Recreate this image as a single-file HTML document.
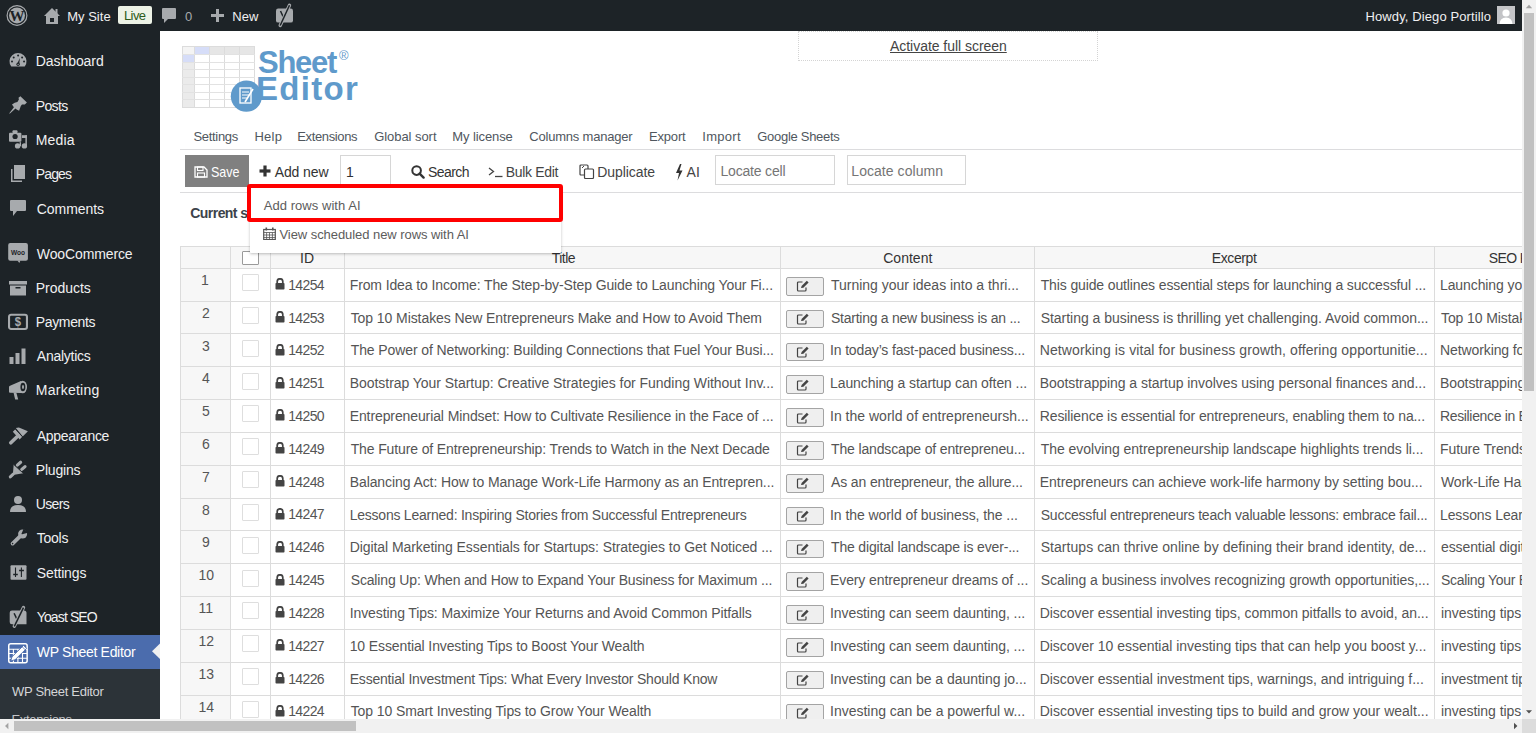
<!DOCTYPE html><html><head><meta charset="utf-8"><title>WP Sheet Editor</title><style>
html,body{margin:0;padding:0;width:1536px;height:733px;overflow:hidden;background:#fff;font-family:"Liberation Sans",sans-serif}
.a{position:absolute}.t{position:absolute;white-space:nowrap;line-height:1}
</style></head><body>
<div class="a" style="left:0px;top:0px;width:1522px;height:31px;background:#1d2327;"></div>
<svg class="a" style="left:5px;top:3px;" width="24" height="25" viewBox="0 0 24 25"><circle cx="12" cy="12.45" r="9.9" fill="none" stroke="#a7aaad" stroke-width="1.2"/><circle cx="12" cy="12.45" r="8" fill="#a7aaad"/><text x="12" y="17.6" text-anchor="middle" font-family="Liberation Serif" font-weight="bold" font-size="15" fill="#1d2327">W</text></svg>
<svg class="a" style="left:43px;top:7px;" width="18" height="18" viewBox="0 0 18 18"><path d="M9 1 L17 9 L15 9 L15 17 L3 17 L3 9 L1 9 Z" fill="#a7aaad"/><rect x="7" y="11" width="4" height="4" fill="#1d2327"/><rect x="12.5" y="2" width="2" height="5" fill="#a7aaad"/></svg>
<div class="t" style="left:67.20px;top:9.80px;font-size:13px;color:#f0f0f1;letter-spacing:0.015px">My Site</div>
<div class="a" style="left:118px;top:6px;width:34px;height:18px;background:#edf2e6;border-radius:2px"></div>
<div class="t" style="left:124.00px;top:9.20px;font-size:13px;color:#2c5a1a;letter-spacing:-0.606px">Live</div>
<svg class="a" style="left:161px;top:7px;" width="16" height="18" viewBox="0 0 16 18"><path d="M2 1 H14 Q15 1 15 2 V11 Q15 12 14 12 H7 L3 16 V12 H2 Q1 12 1 11 V2 Q1 1 2 1 Z" fill="#a7aaad"/></svg>
<div class="t" style="left:185.00px;top:9.80px;font-size:13px;color:#a7aaad">0</div>
<svg class="a" style="left:210px;top:8px;" width="16" height="16" viewBox="0 0 16 16"><rect x="6" y="1" width="3" height="13" fill="#a7aaad"/><rect x="1" y="6" width="13" height="3" fill="#a7aaad"/></svg>
<div class="t" style="left:232.30px;top:9.80px;font-size:13px;color:#f0f0f1;letter-spacing:-0.009px">New</div>
<svg class="a" style="left:270px;top:0px;" width="30" height="30" viewBox="0 0 30 30"><rect x="6" y="8.6" width="17" height="14" rx="2.2" fill="#a7aaad"/><path d="M10.5 11 L14.2 19" stroke="#1d2327" stroke-width="1.5"/><path d="M19.5 5.2 L10.2 25.5" stroke="#a7aaad" stroke-width="3.4" stroke-linecap="round"/><path d="M19.5 5.2 L10.2 25.5" stroke="#1d2327" stroke-width="1.5"/></svg>
<div class="t" style="left:1365.50px;top:10.30px;font-size:13px;color:#f0f0f1;letter-spacing:0.106px">Howdy, Diego Portillo</div>
<div class="a" style="left:1497px;top:6px;width:18px;height:18px;background:#c3c4c7;"></div>
<svg class="a" style="left:1497px;top:6px;" width="18" height="18" viewBox="0 0 18 18"><circle cx="9" cy="7" r="3.6" fill="#fff"/><path d="M2.5 18 Q3 11.5 9 11.5 Q15 11.5 15.5 18 Z" fill="#fff"/></svg>
<div class="a" style="left:0px;top:31px;width:160px;height:688px;background:#1d2327;"></div>
<div class="a" style="left:0px;top:634.6px;width:160px;height:34.4px;background:#4b6cad;"></div>
<div class="a" style="left:0px;top:669px;width:160px;height:50px;background:#2c3338;"></div>
<svg class="a" style="left:151.5px;top:643.3px;" width="8.5" height="16.6" viewBox="0 0 8.5 16.6"><path d="M8.5 0 L0 8.3 L8.5 16.6 Z" fill="#f0f0f1"/></svg>
<div class="t" style="left:35.80px;top:53.70px;font-size:14px;color:#f0f0f1;letter-spacing:-0.075px">Dashboard</div>
<div class="t" style="left:35.80px;top:99.10px;font-size:14px;color:#f0f0f1;letter-spacing:-0.653px">Posts</div>
<div class="t" style="left:35.80px;top:133.20px;font-size:14px;color:#f0f0f1;letter-spacing:0.164px">Media</div>
<div class="t" style="left:35.80px;top:167.30px;font-size:14px;color:#f0f0f1;letter-spacing:-0.874px">Pages</div>
<div class="t" style="left:36.80px;top:201.50px;font-size:14px;color:#f0f0f1;letter-spacing:-0.069px">Comments</div>
<div class="t" style="left:36.80px;top:246.80px;font-size:14px;color:#f0f0f1;letter-spacing:-0.120px">WooCommerce</div>
<div class="t" style="left:35.80px;top:280.90px;font-size:14px;color:#f0f0f1;letter-spacing:-0.035px">Products</div>
<div class="t" style="left:35.80px;top:315.20px;font-size:14px;color:#f0f0f1;letter-spacing:-0.364px">Payments</div>
<div class="t" style="left:36.80px;top:349.30px;font-size:14px;color:#f0f0f1;letter-spacing:-0.253px">Analytics</div>
<div class="t" style="left:35.80px;top:383.40px;font-size:14px;color:#f0f0f1;letter-spacing:0.252px">Marketing</div>
<div class="t" style="left:36.80px;top:428.80px;font-size:14px;color:#f0f0f1;letter-spacing:-0.324px">Appearance</div>
<div class="t" style="left:35.80px;top:463.00px;font-size:14px;color:#f0f0f1;letter-spacing:-0.203px">Plugins</div>
<div class="t" style="left:35.80px;top:497.10px;font-size:14px;color:#f0f0f1;letter-spacing:-0.665px">Users</div>
<div class="t" style="left:36.80px;top:531.20px;font-size:14px;color:#f0f0f1;letter-spacing:-0.271px">Tools</div>
<div class="t" style="left:36.80px;top:565.50px;font-size:14px;color:#f0f0f1;letter-spacing:-0.141px">Settings</div>
<div class="t" style="left:36.80px;top:610.30px;font-size:14px;color:#f0f0f1;letter-spacing:-0.885px">Yoast SEO</div>
<div class="t" style="left:36.80px;top:644.80px;font-size:14px;color:#fff;letter-spacing:-0.316px">WP Sheet Editor</div>
<div class="t" style="left:12.00px;top:684.50px;font-size:13px;color:#d4d5d7;letter-spacing:-0.283px">WP Sheet Editor</div>
<div class="t" style="left:11.50px;top:712.50px;font-size:13px;color:#c3c4c7;letter-spacing:-0.343px">Extensions</div>
<svg class="a" style="left:8px;top:51px;overflow:visible" width="22" height="24" viewBox="0 0 22 24"><path d="M3.28 15.6 A8.5 8.5 0 1 1 16.72 15.6 Z" fill="#a7aaad"/><circle cx="10.1" cy="4.4" r="1" fill="#1d2327"/><circle cx="5.7" cy="6.5" r="1" fill="#1d2327"/><circle cx="14.1" cy="6.5" r="1" fill="#1d2327"/><circle cx="4" cy="10.5" r="1" fill="#1d2327"/><circle cx="16.05" cy="10.5" r="1" fill="#1d2327"/><path d="M9.1 13 L11.9 7 L11.2 13.4 Z" fill="#1d2327"/><circle cx="10.1" cy="13.3" r="1.7" fill="#1d2327"/><circle cx="10.1" cy="13.4" r="0.6" fill="#a7aaad"/></svg>
<svg class="a" style="left:8px;top:96px;overflow:visible" width="22" height="24" viewBox="0 0 22 24"><path d="M12.4 0.2 L18.9 6.5 L16.8 8.6 L14 8.6 L12.8 10.1 L11.1 14.7 L8.6 13.4 L7.5 12.6 L1.7 17.8 L1.3 17.2 L5.9 11.3 L4 8.6 L6.7 6.7 L9.4 6.1 L10.9 3.6 L10.5 1.7 Z" fill="#a7aaad"/></svg>
<svg class="a" style="left:8px;top:130px;overflow:visible" width="22" height="24" viewBox="0 0 22 24"><rect x="1" y="2.7" width="12.4" height="9" rx="1" fill="#a7aaad"/><rect x="4.5" y="0.3" width="5" height="3" rx="1" fill="#a7aaad"/><circle cx="7.1" cy="6.5" r="2.6" fill="#1d2327"/><rect x="13.9" y="5.2" width="5" height="2.8" fill="#a7aaad"/><rect x="17.4" y="5.2" width="1.5" height="11" fill="#a7aaad"/><rect x="11.6" y="12.2" width="1.4" height="4" fill="#a7aaad"/><circle cx="9.6" cy="15.9" r="2.7" fill="#a7aaad"/><circle cx="16.4" cy="15.9" r="2.7" fill="#a7aaad"/></svg>
<svg class="a" style="left:8px;top:164px;overflow:visible" width="22" height="24" viewBox="0 0 22 24"><rect x="6" y="1" width="11" height="14" fill="#a7aaad"/><path d="M3 5 V18 H14 V16.5 H4.5 V5 Z" fill="#a7aaad"/></svg>
<svg class="a" style="left:8px;top:198px;overflow:visible" width="22" height="24" viewBox="0 0 22 24"><path d="M3 2 H17 Q18 2 18 3 V12 Q18 13 17 13 H9 L5 18 V13 H3 Q2 13 2 12 V3 Q2 2 3 2 Z" fill="#a7aaad"/></svg>
<svg class="a" style="left:8px;top:243px;overflow:visible" width="22" height="24" viewBox="0 0 22 24"><rect x="0.2" y="0" width="19.7" height="17.8" rx="2" fill="#a7aaad"/><path d="M9.4 17.6 L11.3 19.9 L12.4 17.6 Z" fill="#a7aaad"/><text x="3" y="11.7" textLength="14" lengthAdjust="spacingAndGlyphs" font-family="Liberation Sans" font-weight="bold" font-size="8" fill="#1d2327">Woo</text></svg>
<svg class="a" style="left:8px;top:278px;overflow:visible" width="22" height="24" viewBox="0 0 22 24"><rect x="1" y="3" width="18" height="3.5" fill="#a7aaad"/><rect x="2" y="7.5" width="16" height="10" fill="#a7aaad"/><rect x="7.5" y="9" width="5" height="1.5" fill="#1d2327"/></svg>
<svg class="a" style="left:8px;top:312px;overflow:visible" width="22" height="24" viewBox="0 0 22 24"><rect x="1.05" y="2.75" width="17.9" height="14.2" rx="2" fill="none" stroke="#a7aaad" stroke-width="2.1"/><text x="9.9" y="14.4" textLength="6.3" lengthAdjust="spacingAndGlyphs" text-anchor="middle" font-family="Liberation Sans" font-weight="bold" font-size="12.5" fill="#a7aaad">$</text></svg>
<svg class="a" style="left:8px;top:346px;overflow:visible" width="22" height="24" viewBox="0 0 22 24"><rect x="1.5" y="11" width="4" height="7" fill="#a7aaad"/><rect x="7.5" y="7" width="4" height="11" fill="#a7aaad"/><rect x="13.5" y="2.5" width="4" height="15.5" fill="#a7aaad"/></svg>
<svg class="a" style="left:8px;top:380px;overflow:visible" width="22" height="24" viewBox="0 0 22 24"><path d="M1 7 Q1 6 2 5.8 L13 1 V13 L2 12.7 Q1 12.7 1 11.7 Z" fill="#a7aaad"/><ellipse cx="14.7" cy="7" rx="4.3" ry="6.3" fill="#a7aaad"/><ellipse cx="14.9" cy="7" rx="2.5" ry="4.3" fill="#1d2327"/><ellipse cx="15" cy="7" rx="1" ry="2.1" fill="#a7aaad"/><path d="M5.5 12.5 L8.3 12.5 L10.2 19.4 L7.2 19.4 Z" fill="#a7aaad"/></svg>
<svg class="a" style="left:8px;top:426px;overflow:visible" width="22" height="24" viewBox="0 0 22 24"><path d="M7.8 2 L10.9 1.4 L19.9 5.3 L14.7 10.6 Z" fill="#a7aaad"/><path d="M4.8 5.8 L7.3 3.3 L14.2 10.7 L11.7 13.5 Z" fill="#a7aaad"/><path d="M7.3 2.8 L14.6 10.8" stroke="#1d2327" stroke-width="0.9"/><path d="M8.8 11 L2.8 16.8" stroke="#a7aaad" stroke-width="3.6" stroke-linecap="round"/></svg>
<svg class="a" style="left:8px;top:460px;overflow:visible" width="22" height="24" viewBox="0 0 22 24"><path d="M5.7 4.5 L15.3 13.3 L4.8 15.1 Z" fill="#a7aaad"/><path d="M5.2 14.2 L2.3 16.9" stroke="#a7aaad" stroke-width="3" stroke-linecap="round"/><path d="M9.4 5.1 L12.6 2.3" stroke="#a7aaad" stroke-width="3.2" stroke-linecap="round"/><path d="M13.8 9.4 L17 6.6" stroke="#a7aaad" stroke-width="3.2" stroke-linecap="round"/><path d="M5.7 4.5 L15.3 13.3" stroke="#1d2327" stroke-width="0.8"/></svg>
<svg class="a" style="left:8px;top:494px;overflow:visible" width="22" height="24" viewBox="0 0 22 24"><circle cx="10" cy="6" r="4" fill="#a7aaad"/><path d="M2 18 Q2 11 10 11 Q18 11 18 18 Z" fill="#a7aaad"/></svg>
<svg class="a" style="left:8px;top:528px;overflow:visible" width="22" height="24" viewBox="0 0 22 24"><circle cx="14.6" cy="6" r="4.5" fill="#a7aaad"/><path d="M13.2 6.4 L15.6 0.8 L21 4.6 Z" fill="#1d2327"/><path d="M12.5 7.8 L4.6 15.6" stroke="#a7aaad" stroke-width="3.8" stroke-linecap="round"/><circle cx="4.6" cy="15.6" r="0.8" fill="#1d2327"/></svg>
<svg class="a" style="left:8px;top:562px;overflow:visible" width="22" height="24" viewBox="0 0 22 24"><rect x="2.5" y="3.3" width="16" height="14.5" rx="1" fill="#a7aaad"/><path d="M7.5 5.5 V15.1 M13.4 5.5 V15.1" stroke="#1d2327" stroke-width="1.1"/><path d="M5.2 12.4 H9.8 M11.1 8.4 H15.9" stroke="#1d2327" stroke-width="1.5"/></svg>
<svg class="a" style="left:8px;top:607px;overflow:visible" width="22" height="24" viewBox="0 0 22 24"><path d="M4 3.45 H16 Q18.5 3.45 18.5 6 V17.2 H4 Q1.7 17.2 1.7 15 V5.7 Q1.7 3.45 4 3.45 Z" fill="#a7aaad"/><path d="M6.1 6.3 L9.6 13.6" stroke="#1d2327" stroke-width="1.5"/><path d="M15.5 0.6 L6.3 19.3" stroke="#a7aaad" stroke-width="3.4" stroke-linecap="round"/><path d="M15.5 0.6 L6.3 19.3" stroke="#1d2327" stroke-width="1.5"/></svg>
<svg class="a" style="left:8px;top:642px;overflow:visible" width="22" height="24" viewBox="0 0 22 24"><rect x="0.75" y="1.75" width="18.4" height="19" rx="2" fill="none" stroke="#fff" stroke-width="1.5"/><path d="M0.75 7.3 H19.15 M0.75 11.5 H19.15 M0.75 16.2 H19.15 M5.4 7.3 V20.75 M9.9 7.3 V20.75 M14.5 7.3 V20.75" stroke="#fff" stroke-width="1.1"/><path d="M2.7 18.9 L4 14.8 L15.6 3.4 L18.6 6.4 L7 17.8 Z" fill="#fff" stroke="#4b6cad" stroke-width="0.9"/><path d="M14.2 4.8 L17.2 7.8" stroke="#4b6cad" stroke-width="0.8"/></svg>
<svg class="a" style="left:182px;top:46px;" width="73" height="62" viewBox="0 0 73 62"><rect x="0.5" y="0.5" width="72" height="61" fill="#fff" stroke="#dcdcdc"/><rect x="1" y="1" width="12" height="60" fill="#ebebeb"/><rect x="1" y="1" width="71" height="8" fill="#e6e6e6"/><rect x="1" y="1" width="12" height="8" fill="#f4f4f4"/><rect x="13" y="1" width="15" height="8" fill="#d6ddf8"/><rect x="1" y="9" width="12" height="7" fill="#d6ddf8"/><line x1="12.5" y1="0" x2="12.5" y2="62" stroke="#dcdcdc" stroke-width="1"/><line x1="27.5" y1="0" x2="27.5" y2="62" stroke="#dcdcdc" stroke-width="1"/><line x1="42.5" y1="0" x2="42.5" y2="62" stroke="#dcdcdc" stroke-width="1"/><line x1="57.5" y1="0" x2="57.5" y2="62" stroke="#dcdcdc" stroke-width="1"/><line x1="0" y1="8.5" x2="73" y2="8.5" stroke="#e2e2e2" stroke-width="1"/><line x1="0" y1="16.5" x2="73" y2="16.5" stroke="#e2e2e2" stroke-width="1"/><line x1="0" y1="23.5" x2="73" y2="23.5" stroke="#e2e2e2" stroke-width="1"/><line x1="0" y1="31.5" x2="73" y2="31.5" stroke="#e2e2e2" stroke-width="1"/><line x1="0" y1="38.5" x2="73" y2="38.5" stroke="#e2e2e2" stroke-width="1"/><line x1="0" y1="46.5" x2="73" y2="46.5" stroke="#e2e2e2" stroke-width="1"/><line x1="0" y1="53.5" x2="73" y2="53.5" stroke="#e2e2e2" stroke-width="1"/></svg>
<svg class="a" style="left:230px;top:80px;" width="33" height="33" viewBox="0 0 33 33"><circle cx="16.4" cy="16.2" r="15.6" fill="#5f9acb"/><rect x="10" y="8" width="11" height="15" fill="none" stroke="#fff" stroke-width="1.3"/><path d="M12 12 H19 M12 15 H19 M12 18 H17" stroke="#fff" stroke-width="1"/><path d="M15 22 L23 9" stroke="#fff" stroke-width="1.6"/></svg>
<div class="t" style="left:258.00px;top:46.80px;font-size:31px;color:#5f9acb;font-weight:bold;letter-spacing:-1.274px">Sheet</div>
<div class="t" style="left:256.00px;top:72.00px;font-size:33px;color:#5f9acb;font-weight:bold;letter-spacing:1.303px">Editor</div>
<div class="t" style="left:339.00px;top:48.50px;font-size:13px;color:#5f9acb">®</div>
<div class="a" style="left:798px;top:31px;width:300px;height:29.5px;background:transparent;box-sizing:border-box;border:1px dotted #d4d4d4"></div>
<div class="t" style="left:890.00px;top:38.80px;font-size:14px;color:#444;letter-spacing:-0.037px;text-decoration:underline">Activate full screen</div>
<div class="t" style="left:193.40px;top:130.00px;font-size:13px;color:#50575e;letter-spacing:-0.296px">Settings</div>
<div class="t" style="left:254.40px;top:130.00px;font-size:13px;color:#50575e;letter-spacing:0.265px">Help</div>
<div class="t" style="left:297.30px;top:130.00px;font-size:13px;color:#50575e;letter-spacing:-0.366px">Extensions</div>
<div class="t" style="left:374.20px;top:130.00px;font-size:13px;color:#50575e;letter-spacing:-0.055px">Global sort</div>
<div class="t" style="left:452.30px;top:130.00px;font-size:13px;color:#50575e;letter-spacing:-0.097px">My license</div>
<div class="t" style="left:529.30px;top:130.00px;font-size:13px;color:#50575e;letter-spacing:-0.206px">Columns manager</div>
<div class="t" style="left:649.10px;top:130.00px;font-size:13px;color:#50575e;letter-spacing:-0.212px">Export</div>
<div class="t" style="left:702.30px;top:130.00px;font-size:13px;color:#50575e;letter-spacing:0.274px">Import</div>
<div class="t" style="left:757.30px;top:130.00px;font-size:13px;color:#50575e;letter-spacing:-0.292px">Google Sheets</div>
<div class="a" style="left:180px;top:149px;width:1342px;height:1px;background:#dcdcde;"></div>
<div class="a" style="left:185px;top:155.3px;width:64.3px;height:31.5px;background:#808080;"></div>
<svg class="a" style="left:194px;top:166px;" width="14" height="12" viewBox="0 0 14 12"><path d="M1 1 H10 L13 4 V11 H1 Z" fill="none" stroke="#fff" stroke-width="1.3"/><rect x="3.5" y="1" width="5.5" height="3.5" fill="none" stroke="#fff" stroke-width="1.1"/><rect x="3.5" y="7" width="7" height="4" fill="none" stroke="#fff" stroke-width="1.1"/></svg>
<div class="t" style="left:210.90px;top:163.80px;font-size:15px;color:#fff;transform:scaleX(0.8361);transform-origin:0.00px 0">Save</div>
<svg class="a" style="left:259px;top:165px;" width="12" height="12" viewBox="0 0 12 12"><rect x="4.4" y="0.5" width="3.2" height="11" fill="#333"/><rect x="0.5" y="4.4" width="11" height="3.2" fill="#333"/></svg>
<div class="t" style="left:274.70px;top:164.80px;font-size:14px;color:#333;letter-spacing:-0.112px">Add new</div>
<div class="a" style="left:340.2px;top:155.3px;width:51px;height:30px;background:#fff;box-sizing:border-box;border:1px solid #d6d6d6"></div>
<div class="t" style="left:346.00px;top:164.80px;font-size:14px;color:#333">1</div>
<svg class="a" style="left:411px;top:165px;" width="14" height="14" viewBox="0 0 14 14"><circle cx="5.6" cy="5.6" r="4.3" fill="none" stroke="#333" stroke-width="2"/><path d="M8.6 8.6 L12.6 12.6" stroke="#333" stroke-width="2.4" stroke-linecap="round"/></svg>
<div class="t" style="left:428.00px;top:164.80px;font-size:14px;color:#333;letter-spacing:-0.574px">Search</div>
<svg class="a" style="left:488px;top:166px;" width="16" height="12" viewBox="0 0 16 12"><path d="M1 2 L5.5 5.5 L1 9" fill="none" stroke="#444" stroke-width="1.3"/><path d="M7 10.5 H14.5" stroke="#444" stroke-width="1.3"/></svg>
<div class="t" style="left:505.70px;top:164.70px;font-size:14px;color:#444;letter-spacing:-0.307px">Bulk Edit</div>
<svg class="a" style="left:579px;top:164px;" width="16" height="15" viewBox="0 0 16 15"><rect x="5.5" y="5" width="9" height="9.5" rx="1" fill="#fff" stroke="#444" stroke-width="1.2"/><path d="M5.5 11 H2 Q1 11 1 10 V2 Q1 1 2 1 H8 Q9 1 9 2 V5" fill="none" stroke="#444" stroke-width="1.2"/><path d="M3 4 L5 2" stroke="#444" stroke-width="1"/></svg>
<div class="t" style="left:597.30px;top:164.70px;font-size:14px;color:#444;letter-spacing:-0.085px">Duplicate</div>
<svg class="a" style="left:675px;top:164px;" width="8" height="17" viewBox="0 0 8 17"><path d="M5 0 L1 9 H4 L2.5 16.5 L7.5 6.5 H4.5 L6.5 0 Z" fill="#333"/></svg>
<div class="t" style="left:686.60px;top:164.70px;font-size:14px;color:#444;letter-spacing:-0.038px">AI</div>
<div class="a" style="left:715.2px;top:155.3px;width:119.6px;height:29.5px;background:#fff;box-sizing:border-box;border:1px solid #d6d6d6"></div>
<div class="t" style="left:720.50px;top:163.80px;font-size:14px;color:#757575;letter-spacing:-0.192px">Locate cell</div>
<div class="a" style="left:846.5px;top:155.3px;width:119.7px;height:29.5px;background:#fff;box-sizing:border-box;border:1px solid #d6d6d6"></div>
<div class="t" style="left:851.30px;top:163.80px;font-size:14px;color:#757575;letter-spacing:0.053px">Locate column</div>
<div class="a" style="left:180px;top:192px;width:1342px;height:1px;background:#dcdcde;"></div>
<div class="t" style="left:190.30px;top:205.70px;font-size:14px;color:#3c434a;font-weight:bold;letter-spacing:-0.556px">Current sheet</div>
<div class="a" style="left:0;top:0;width:1522px;height:719px;overflow:hidden">
<div class="a" style="left:180.5px;top:246.3px;width:1342px;height:22px;background:#f7f7f7;"></div>
<div class="a" style="left:180.5px;top:268.3px;width:50px;height:460px;background:#f7f7f7;"></div>
<div class="a" style="left:180px;top:246px;width:1342px;height:1px;background:#dcdcdc;"></div>
<div class="a" style="left:180px;top:267.8px;width:1342px;height:1px;background:#dcdcdc;"></div>
<div class="a" style="left:180px;top:300.6px;width:1342px;height:1px;background:#dcdcdc;"></div>
<div class="a" style="left:180px;top:333.4px;width:1342px;height:1px;background:#dcdcdc;"></div>
<div class="a" style="left:180px;top:366.3px;width:1342px;height:1px;background:#dcdcdc;"></div>
<div class="a" style="left:180px;top:399.1px;width:1342px;height:1px;background:#dcdcdc;"></div>
<div class="a" style="left:180px;top:431.9px;width:1342px;height:1px;background:#dcdcdc;"></div>
<div class="a" style="left:180px;top:464.7px;width:1342px;height:1px;background:#dcdcdc;"></div>
<div class="a" style="left:180px;top:497.5px;width:1342px;height:1px;background:#dcdcdc;"></div>
<div class="a" style="left:180px;top:530.4px;width:1342px;height:1px;background:#dcdcdc;"></div>
<div class="a" style="left:180px;top:563.2px;width:1342px;height:1px;background:#dcdcdc;"></div>
<div class="a" style="left:180px;top:596.0px;width:1342px;height:1px;background:#dcdcdc;"></div>
<div class="a" style="left:180px;top:628.8px;width:1342px;height:1px;background:#dcdcdc;"></div>
<div class="a" style="left:180px;top:661.6px;width:1342px;height:1px;background:#dcdcdc;"></div>
<div class="a" style="left:180px;top:694.5px;width:1342px;height:1px;background:#dcdcdc;"></div>
<div class="a" style="left:180px;top:727.3px;width:1342px;height:1px;background:#dcdcdc;"></div>
<div class="a" style="left:180px;top:246px;width:1px;height:480px;background:#dcdcdc;"></div>
<div class="a" style="left:230px;top:246px;width:1px;height:480px;background:#dcdcdc;"></div>
<div class="a" style="left:270px;top:246px;width:1px;height:480px;background:#dcdcdc;"></div>
<div class="a" style="left:344px;top:246px;width:1px;height:480px;background:#dcdcdc;"></div>
<div class="a" style="left:780px;top:246px;width:1px;height:480px;background:#dcdcdc;"></div>
<div class="a" style="left:1034px;top:246px;width:1px;height:480px;background:#dcdcdc;"></div>
<div class="a" style="left:1434px;top:246px;width:1px;height:480px;background:#dcdcdc;"></div>
<div class="t" style="left:300.10px;top:250.80px;font-size:14px;color:#333;letter-spacing:-0.090px">ID</div>
<div class="t" style="left:551.70px;top:250.80px;font-size:14px;color:#333;letter-spacing:-0.511px">Title</div>
<div class="t" style="left:883.20px;top:250.50px;font-size:14px;color:#333;letter-spacing:0.026px">Content</div>
<div class="t" style="left:1211.70px;top:250.50px;font-size:14px;color:#333;letter-spacing:-0.379px">Excerpt</div>
<div class="t" style="left:1488.80px;top:250.50px;font-size:14px;color:#333;letter-spacing:-0.600px">SEO Keyword</div>
<div class="a" style="left:241.8px;top:251px;width:17px;height:13.5px;background:#fff;box-sizing:border-box;border:1px solid #9a9a9a;border-radius:1px"></div>
<div class="t" style="left:201.00px;top:272.90px;font-size:14px;color:#555">1</div>
<div class="a" style="left:241.8px;top:274.1px;width:17px;height:17px;background:#fff;box-sizing:border-box;border:1px solid #dedede;border-radius:1px"></div>
<svg class="a" style="left:275px;top:278.1px;" width="10" height="12" viewBox="0 0 10 12"><path d="M2.2 5 V3.6 A2.8 2.8 0 0 1 7.8 3.6 V5" fill="none" stroke="#444" stroke-width="1.7"/><rect x="0.5" y="5" width="9" height="6.5" rx="0.8" fill="#444"/></svg>
<div class="t" style="left:288.20px;top:277.70px;font-size:14px;color:#555;letter-spacing:-0.636px">14254</div>
<div class="t" style="left:349.70px;top:277.80px;font-size:14px;color:#555;letter-spacing:-0.114px">From Idea to Income: The Step-by-Step Guide to Launching Your Fi...</div>
<div class="a" style="left:786.3px;top:276.9px;width:37.4px;height:18.8px;background:#efefef;box-sizing:border-box;border:1px solid #a4a4a4;border-radius:2px"></div>
<svg class="a" style="left:796px;top:280.3px;" width="14" height="12" viewBox="0 0 14 12"><path d="M6.5 2 H2.5 Q1.5 2 1.5 3 V10 Q1.5 11 2.5 11 H9 Q10 11 10 10 V7.5" fill="none" stroke="#444" stroke-width="1.2"/><path d="M5 8 L5.6 6 L10.8 0.8 L12.6 2.6 L7.4 7.8 Z" fill="#444"/></svg>
<div class="t" style="left:831.00px;top:277.80px;font-size:14px;color:#555;letter-spacing:-0.018px">Turning your ideas into a thri...</div>
<div class="t" style="left:1040.70px;top:277.80px;font-size:14px;color:#555;letter-spacing:-0.129px">This guide outlines essential steps for launching a successful ...</div>
<div class="t" style="left:1440.00px;top:277.80px;font-size:14px;color:#555;letter-spacing:-0.100px">Launching your idea</div>
<div class="t" style="left:202.00px;top:305.72px;font-size:14px;color:#555">2</div>
<div class="a" style="left:241.8px;top:306.9px;width:17px;height:17px;background:#fff;box-sizing:border-box;border:1px solid #dedede;border-radius:1px"></div>
<svg class="a" style="left:275px;top:310.9px;" width="10" height="12" viewBox="0 0 10 12"><path d="M2.2 5 V3.6 A2.8 2.8 0 0 1 7.8 3.6 V5" fill="none" stroke="#444" stroke-width="1.7"/><rect x="0.5" y="5" width="9" height="6.5" rx="0.8" fill="#444"/></svg>
<div class="t" style="left:288.20px;top:310.52px;font-size:14px;color:#555;letter-spacing:-0.636px">14253</div>
<div class="t" style="left:350.70px;top:310.62px;font-size:14px;color:#555;letter-spacing:-0.076px">Top 10 Mistakes New Entrepreneurs Make and How to Avoid Them</div>
<div class="a" style="left:786.3px;top:309.7px;width:37.4px;height:18.8px;background:#efefef;box-sizing:border-box;border:1px solid #a4a4a4;border-radius:2px"></div>
<svg class="a" style="left:796px;top:313.1px;" width="14" height="12" viewBox="0 0 14 12"><path d="M6.5 2 H2.5 Q1.5 2 1.5 3 V10 Q1.5 11 2.5 11 H9 Q10 11 10 10 V7.5" fill="none" stroke="#444" stroke-width="1.2"/><path d="M5 8 L5.6 6 L10.8 0.8 L12.6 2.6 L7.4 7.8 Z" fill="#444"/></svg>
<div class="t" style="left:831.00px;top:310.62px;font-size:14px;color:#555;letter-spacing:-0.252px">Starting a new business is an ...</div>
<div class="t" style="left:1040.70px;top:310.62px;font-size:14px;color:#555;letter-spacing:-0.028px">Starting a business is thrilling yet challenging. Avoid common...</div>
<div class="t" style="left:1441.00px;top:310.62px;font-size:14px;color:#555;letter-spacing:-0.100px">Top 10 Mistakes</div>
<div class="t" style="left:202.00px;top:338.54px;font-size:14px;color:#555">3</div>
<div class="a" style="left:241.8px;top:339.7px;width:17px;height:17px;background:#fff;box-sizing:border-box;border:1px solid #dedede;border-radius:1px"></div>
<svg class="a" style="left:275px;top:343.7px;" width="10" height="12" viewBox="0 0 10 12"><path d="M2.2 5 V3.6 A2.8 2.8 0 0 1 7.8 3.6 V5" fill="none" stroke="#444" stroke-width="1.7"/><rect x="0.5" y="5" width="9" height="6.5" rx="0.8" fill="#444"/></svg>
<div class="t" style="left:288.20px;top:343.34px;font-size:14px;color:#555;letter-spacing:-0.636px">14252</div>
<div class="t" style="left:350.70px;top:343.44px;font-size:14px;color:#555;letter-spacing:-0.095px">The Power of Networking: Building Connections that Fuel Your Busi...</div>
<div class="a" style="left:786.3px;top:342.5px;width:37.4px;height:18.8px;background:#efefef;box-sizing:border-box;border:1px solid #a4a4a4;border-radius:2px"></div>
<svg class="a" style="left:796px;top:345.9px;" width="14" height="12" viewBox="0 0 14 12"><path d="M6.5 2 H2.5 Q1.5 2 1.5 3 V10 Q1.5 11 2.5 11 H9 Q10 11 10 10 V7.5" fill="none" stroke="#444" stroke-width="1.2"/><path d="M5 8 L5.6 6 L10.8 0.8 L12.6 2.6 L7.4 7.8 Z" fill="#444"/></svg>
<div class="t" style="left:830.00px;top:343.44px;font-size:14px;color:#555;letter-spacing:-0.146px">In today’s fast-paced business...</div>
<div class="t" style="left:1039.70px;top:343.44px;font-size:14px;color:#555;letter-spacing:0.109px">Networking is vital for business growth, offering opportunitie...</div>
<div class="t" style="left:1440.00px;top:343.44px;font-size:14px;color:#555;letter-spacing:-0.100px">Networking for growth</div>
<div class="t" style="left:202.00px;top:371.36px;font-size:14px;color:#555">4</div>
<div class="a" style="left:241.8px;top:372.6px;width:17px;height:17px;background:#fff;box-sizing:border-box;border:1px solid #dedede;border-radius:1px"></div>
<svg class="a" style="left:275px;top:376.6px;" width="10" height="12" viewBox="0 0 10 12"><path d="M2.2 5 V3.6 A2.8 2.8 0 0 1 7.8 3.6 V5" fill="none" stroke="#444" stroke-width="1.7"/><rect x="0.5" y="5" width="9" height="6.5" rx="0.8" fill="#444"/></svg>
<div class="t" style="left:288.20px;top:376.16px;font-size:14px;color:#555;letter-spacing:-0.636px">14251</div>
<div class="t" style="left:349.70px;top:376.26px;font-size:14px;color:#555;letter-spacing:-0.040px">Bootstrap Your Startup: Creative Strategies for Funding Without Inv...</div>
<div class="a" style="left:786.3px;top:375.4px;width:37.4px;height:18.8px;background:#efefef;box-sizing:border-box;border:1px solid #a4a4a4;border-radius:2px"></div>
<svg class="a" style="left:796px;top:378.8px;" width="14" height="12" viewBox="0 0 14 12"><path d="M6.5 2 H2.5 Q1.5 2 1.5 3 V10 Q1.5 11 2.5 11 H9 Q10 11 10 10 V7.5" fill="none" stroke="#444" stroke-width="1.2"/><path d="M5 8 L5.6 6 L10.8 0.8 L12.6 2.6 L7.4 7.8 Z" fill="#444"/></svg>
<div class="t" style="left:830.00px;top:376.26px;font-size:14px;color:#555;letter-spacing:-0.092px">Launching a startup can often ...</div>
<div class="t" style="left:1039.70px;top:376.26px;font-size:14px;color:#555;letter-spacing:-0.044px">Bootstrapping a startup involves using personal finances and...</div>
<div class="t" style="left:1440.00px;top:376.26px;font-size:14px;color:#555;letter-spacing:-0.100px">Bootstrapping startup</div>
<div class="t" style="left:202.00px;top:404.18px;font-size:14px;color:#555">5</div>
<div class="a" style="left:241.8px;top:405.4px;width:17px;height:17px;background:#fff;box-sizing:border-box;border:1px solid #dedede;border-radius:1px"></div>
<svg class="a" style="left:275px;top:409.4px;" width="10" height="12" viewBox="0 0 10 12"><path d="M2.2 5 V3.6 A2.8 2.8 0 0 1 7.8 3.6 V5" fill="none" stroke="#444" stroke-width="1.7"/><rect x="0.5" y="5" width="9" height="6.5" rx="0.8" fill="#444"/></svg>
<div class="t" style="left:288.20px;top:408.98px;font-size:14px;color:#555;letter-spacing:-0.636px">14250</div>
<div class="t" style="left:349.70px;top:409.08px;font-size:14px;color:#555;letter-spacing:-0.103px">Entrepreneurial Mindset: How to Cultivate Resilience in the Face of ...</div>
<div class="a" style="left:786.3px;top:408.2px;width:37.4px;height:18.8px;background:#efefef;box-sizing:border-box;border:1px solid #a4a4a4;border-radius:2px"></div>
<svg class="a" style="left:796px;top:411.6px;" width="14" height="12" viewBox="0 0 14 12"><path d="M6.5 2 H2.5 Q1.5 2 1.5 3 V10 Q1.5 11 2.5 11 H9 Q10 11 10 10 V7.5" fill="none" stroke="#444" stroke-width="1.2"/><path d="M5 8 L5.6 6 L10.8 0.8 L12.6 2.6 L7.4 7.8 Z" fill="#444"/></svg>
<div class="t" style="left:830.00px;top:409.08px;font-size:14px;color:#555;letter-spacing:0.008px">In the world of entrepreneursh...</div>
<div class="t" style="left:1039.70px;top:409.08px;font-size:14px;color:#555;letter-spacing:-0.095px">Resilience is essential for entrepreneurs, enabling them to na...</div>
<div class="t" style="left:1440.00px;top:409.08px;font-size:14px;color:#555;letter-spacing:-0.349px">Resilience in Entrepreneurship</div>
<div class="t" style="left:202.00px;top:437.00px;font-size:14px;color:#555">6</div>
<div class="a" style="left:241.8px;top:438.2px;width:17px;height:17px;background:#fff;box-sizing:border-box;border:1px solid #dedede;border-radius:1px"></div>
<svg class="a" style="left:275px;top:442.2px;" width="10" height="12" viewBox="0 0 10 12"><path d="M2.2 5 V3.6 A2.8 2.8 0 0 1 7.8 3.6 V5" fill="none" stroke="#444" stroke-width="1.7"/><rect x="0.5" y="5" width="9" height="6.5" rx="0.8" fill="#444"/></svg>
<div class="t" style="left:288.20px;top:441.80px;font-size:14px;color:#555;letter-spacing:-0.636px">14249</div>
<div class="t" style="left:350.70px;top:441.90px;font-size:14px;color:#555;letter-spacing:-0.127px">The Future of Entrepreneurship: Trends to Watch in the Next Decade</div>
<div class="a" style="left:786.3px;top:441.0px;width:37.4px;height:18.8px;background:#efefef;box-sizing:border-box;border:1px solid #a4a4a4;border-radius:2px"></div>
<svg class="a" style="left:796px;top:444.4px;" width="14" height="12" viewBox="0 0 14 12"><path d="M6.5 2 H2.5 Q1.5 2 1.5 3 V10 Q1.5 11 2.5 11 H9 Q10 11 10 10 V7.5" fill="none" stroke="#444" stroke-width="1.2"/><path d="M5 8 L5.6 6 L10.8 0.8 L12.6 2.6 L7.4 7.8 Z" fill="#444"/></svg>
<div class="t" style="left:831.00px;top:441.90px;font-size:14px;color:#555;letter-spacing:-0.146px">The landscape of entrepreneu...</div>
<div class="t" style="left:1040.70px;top:441.90px;font-size:14px;color:#555;letter-spacing:-0.027px">The evolving entrepreneurship landscape highlights trends li...</div>
<div class="t" style="left:1440.00px;top:441.90px;font-size:14px;color:#555;letter-spacing:-0.100px">Future Trends</div>
<div class="t" style="left:202.00px;top:469.82px;font-size:14px;color:#555">7</div>
<div class="a" style="left:241.8px;top:471.0px;width:17px;height:17px;background:#fff;box-sizing:border-box;border:1px solid #dedede;border-radius:1px"></div>
<svg class="a" style="left:275px;top:475.0px;" width="10" height="12" viewBox="0 0 10 12"><path d="M2.2 5 V3.6 A2.8 2.8 0 0 1 7.8 3.6 V5" fill="none" stroke="#444" stroke-width="1.7"/><rect x="0.5" y="5" width="9" height="6.5" rx="0.8" fill="#444"/></svg>
<div class="t" style="left:288.20px;top:474.62px;font-size:14px;color:#555;letter-spacing:-0.636px">14248</div>
<div class="t" style="left:349.70px;top:474.72px;font-size:14px;color:#555;letter-spacing:-0.084px">Balancing Act: How to Manage Work-Life Harmony as an Entrepren...</div>
<div class="a" style="left:786.3px;top:473.8px;width:37.4px;height:18.8px;background:#efefef;box-sizing:border-box;border:1px solid #a4a4a4;border-radius:2px"></div>
<svg class="a" style="left:796px;top:477.2px;" width="14" height="12" viewBox="0 0 14 12"><path d="M6.5 2 H2.5 Q1.5 2 1.5 3 V10 Q1.5 11 2.5 11 H9 Q10 11 10 10 V7.5" fill="none" stroke="#444" stroke-width="1.2"/><path d="M5 8 L5.6 6 L10.8 0.8 L12.6 2.6 L7.4 7.8 Z" fill="#444"/></svg>
<div class="t" style="left:831.00px;top:474.72px;font-size:14px;color:#555;letter-spacing:-0.132px">As an entrepreneur, the allure...</div>
<div class="t" style="left:1039.70px;top:474.72px;font-size:14px;color:#555;letter-spacing:-0.025px">Entrepreneurs can achieve work-life harmony by setting bou...</div>
<div class="t" style="left:1441.00px;top:474.72px;font-size:14px;color:#555;letter-spacing:-0.100px">Work-Life Harmony</div>
<div class="t" style="left:202.00px;top:502.64px;font-size:14px;color:#555">8</div>
<div class="a" style="left:241.8px;top:503.8px;width:17px;height:17px;background:#fff;box-sizing:border-box;border:1px solid #dedede;border-radius:1px"></div>
<svg class="a" style="left:275px;top:507.8px;" width="10" height="12" viewBox="0 0 10 12"><path d="M2.2 5 V3.6 A2.8 2.8 0 0 1 7.8 3.6 V5" fill="none" stroke="#444" stroke-width="1.7"/><rect x="0.5" y="5" width="9" height="6.5" rx="0.8" fill="#444"/></svg>
<div class="t" style="left:288.20px;top:507.44px;font-size:14px;color:#555;letter-spacing:-0.636px">14247</div>
<div class="t" style="left:349.70px;top:507.54px;font-size:14px;color:#555;letter-spacing:-0.231px">Lessons Learned: Inspiring Stories from Successful Entrepreneurs</div>
<div class="a" style="left:786.3px;top:506.6px;width:37.4px;height:18.8px;background:#efefef;box-sizing:border-box;border:1px solid #a4a4a4;border-radius:2px"></div>
<svg class="a" style="left:796px;top:510.0px;" width="14" height="12" viewBox="0 0 14 12"><path d="M6.5 2 H2.5 Q1.5 2 1.5 3 V10 Q1.5 11 2.5 11 H9 Q10 11 10 10 V7.5" fill="none" stroke="#444" stroke-width="1.2"/><path d="M5 8 L5.6 6 L10.8 0.8 L12.6 2.6 L7.4 7.8 Z" fill="#444"/></svg>
<div class="t" style="left:830.00px;top:507.54px;font-size:14px;color:#555;letter-spacing:-0.062px">In the world of business, the ...</div>
<div class="t" style="left:1040.70px;top:507.54px;font-size:14px;color:#555;letter-spacing:-0.206px">Successful entrepreneurs teach valuable lessons: embrace fail...</div>
<div class="t" style="left:1440.00px;top:507.54px;font-size:14px;color:#555;letter-spacing:-0.100px">Lessons Learned</div>
<div class="t" style="left:202.00px;top:535.46px;font-size:14px;color:#555">9</div>
<div class="a" style="left:241.8px;top:536.7px;width:17px;height:17px;background:#fff;box-sizing:border-box;border:1px solid #dedede;border-radius:1px"></div>
<svg class="a" style="left:275px;top:540.7px;" width="10" height="12" viewBox="0 0 10 12"><path d="M2.2 5 V3.6 A2.8 2.8 0 0 1 7.8 3.6 V5" fill="none" stroke="#444" stroke-width="1.7"/><rect x="0.5" y="5" width="9" height="6.5" rx="0.8" fill="#444"/></svg>
<div class="t" style="left:288.20px;top:540.26px;font-size:14px;color:#555;letter-spacing:-0.636px">14246</div>
<div class="t" style="left:349.70px;top:540.36px;font-size:14px;color:#555;letter-spacing:-0.070px">Digital Marketing Essentials for Startups: Strategies to Get Noticed ...</div>
<div class="a" style="left:786.3px;top:539.5px;width:37.4px;height:18.8px;background:#efefef;box-sizing:border-box;border:1px solid #a4a4a4;border-radius:2px"></div>
<svg class="a" style="left:796px;top:542.9px;" width="14" height="12" viewBox="0 0 14 12"><path d="M6.5 2 H2.5 Q1.5 2 1.5 3 V10 Q1.5 11 2.5 11 H9 Q10 11 10 10 V7.5" fill="none" stroke="#444" stroke-width="1.2"/><path d="M5 8 L5.6 6 L10.8 0.8 L12.6 2.6 L7.4 7.8 Z" fill="#444"/></svg>
<div class="t" style="left:831.00px;top:540.36px;font-size:14px;color:#555;letter-spacing:-0.165px">The digital landscape is ever-...</div>
<div class="t" style="left:1040.70px;top:540.36px;font-size:14px;color:#555;letter-spacing:0.047px">Startups can thrive online by defining their brand identity, de...</div>
<div class="t" style="left:1441.00px;top:540.36px;font-size:14px;color:#555;letter-spacing:-0.100px">essential digital</div>
<div class="t" style="left:198.50px;top:568.28px;font-size:14px;color:#555">10</div>
<div class="a" style="left:241.8px;top:569.5px;width:17px;height:17px;background:#fff;box-sizing:border-box;border:1px solid #dedede;border-radius:1px"></div>
<svg class="a" style="left:275px;top:573.5px;" width="10" height="12" viewBox="0 0 10 12"><path d="M2.2 5 V3.6 A2.8 2.8 0 0 1 7.8 3.6 V5" fill="none" stroke="#444" stroke-width="1.7"/><rect x="0.5" y="5" width="9" height="6.5" rx="0.8" fill="#444"/></svg>
<div class="t" style="left:288.20px;top:573.08px;font-size:14px;color:#555;letter-spacing:-0.636px">14245</div>
<div class="t" style="left:350.70px;top:573.18px;font-size:14px;color:#555;letter-spacing:-0.149px">Scaling Up: When and How to Expand Your Business for Maximum ...</div>
<div class="a" style="left:786.3px;top:572.3px;width:37.4px;height:18.8px;background:#efefef;box-sizing:border-box;border:1px solid #a4a4a4;border-radius:2px"></div>
<svg class="a" style="left:796px;top:575.7px;" width="14" height="12" viewBox="0 0 14 12"><path d="M6.5 2 H2.5 Q1.5 2 1.5 3 V10 Q1.5 11 2.5 11 H9 Q10 11 10 10 V7.5" fill="none" stroke="#444" stroke-width="1.2"/><path d="M5 8 L5.6 6 L10.8 0.8 L12.6 2.6 L7.4 7.8 Z" fill="#444"/></svg>
<div class="t" style="left:830.00px;top:573.18px;font-size:14px;color:#555;letter-spacing:-0.105px">Every entrepreneur dreams of ...</div>
<div class="t" style="left:1040.70px;top:573.18px;font-size:14px;color:#555;letter-spacing:-0.053px">Scaling a business involves recognizing growth opportunities,...</div>
<div class="t" style="left:1441.00px;top:573.18px;font-size:14px;color:#555;letter-spacing:-0.312px">Scaling Your Business</div>
<div class="t" style="left:198.50px;top:601.10px;font-size:14px;color:#555">11</div>
<div class="a" style="left:241.8px;top:602.3px;width:17px;height:17px;background:#fff;box-sizing:border-box;border:1px solid #dedede;border-radius:1px"></div>
<svg class="a" style="left:275px;top:606.3px;" width="10" height="12" viewBox="0 0 10 12"><path d="M2.2 5 V3.6 A2.8 2.8 0 0 1 7.8 3.6 V5" fill="none" stroke="#444" stroke-width="1.7"/><rect x="0.5" y="5" width="9" height="6.5" rx="0.8" fill="#444"/></svg>
<div class="t" style="left:288.20px;top:605.90px;font-size:14px;color:#555;letter-spacing:-0.636px">14228</div>
<div class="t" style="left:349.70px;top:606.00px;font-size:14px;color:#555;letter-spacing:-0.101px">Investing Tips: Maximize Your Returns and Avoid Common Pitfalls</div>
<div class="a" style="left:786.3px;top:605.1px;width:37.4px;height:18.8px;background:#efefef;box-sizing:border-box;border:1px solid #a4a4a4;border-radius:2px"></div>
<svg class="a" style="left:796px;top:608.5px;" width="14" height="12" viewBox="0 0 14 12"><path d="M6.5 2 H2.5 Q1.5 2 1.5 3 V10 Q1.5 11 2.5 11 H9 Q10 11 10 10 V7.5" fill="none" stroke="#444" stroke-width="1.2"/><path d="M5 8 L5.6 6 L10.8 0.8 L12.6 2.6 L7.4 7.8 Z" fill="#444"/></svg>
<div class="t" style="left:830.00px;top:606.00px;font-size:14px;color:#555;letter-spacing:-0.083px">Investing can seem daunting, ...</div>
<div class="t" style="left:1039.70px;top:606.00px;font-size:14px;color:#555;letter-spacing:-0.039px">Discover essential investing tips, common pitfalls to avoid, an...</div>
<div class="t" style="left:1441.00px;top:606.00px;font-size:14px;color:#555;letter-spacing:-0.049px">investing tips</div>
<div class="t" style="left:198.50px;top:633.92px;font-size:14px;color:#555">12</div>
<div class="a" style="left:241.8px;top:635.1px;width:17px;height:17px;background:#fff;box-sizing:border-box;border:1px solid #dedede;border-radius:1px"></div>
<svg class="a" style="left:275px;top:639.1px;" width="10" height="12" viewBox="0 0 10 12"><path d="M2.2 5 V3.6 A2.8 2.8 0 0 1 7.8 3.6 V5" fill="none" stroke="#444" stroke-width="1.7"/><rect x="0.5" y="5" width="9" height="6.5" rx="0.8" fill="#444"/></svg>
<div class="t" style="left:288.20px;top:638.72px;font-size:14px;color:#555;letter-spacing:-0.636px">14227</div>
<div class="t" style="left:349.70px;top:638.82px;font-size:14px;color:#555;letter-spacing:-0.114px">10 Essential Investing Tips to Boost Your Wealth</div>
<div class="a" style="left:786.3px;top:637.9px;width:37.4px;height:18.8px;background:#efefef;box-sizing:border-box;border:1px solid #a4a4a4;border-radius:2px"></div>
<svg class="a" style="left:796px;top:641.3px;" width="14" height="12" viewBox="0 0 14 12"><path d="M6.5 2 H2.5 Q1.5 2 1.5 3 V10 Q1.5 11 2.5 11 H9 Q10 11 10 10 V7.5" fill="none" stroke="#444" stroke-width="1.2"/><path d="M5 8 L5.6 6 L10.8 0.8 L12.6 2.6 L7.4 7.8 Z" fill="#444"/></svg>
<div class="t" style="left:830.00px;top:638.82px;font-size:14px;color:#555;letter-spacing:-0.083px">Investing can seem daunting, ...</div>
<div class="t" style="left:1039.70px;top:638.82px;font-size:14px;color:#555;letter-spacing:-0.021px">Discover 10 essential investing tips that can help you boost y...</div>
<div class="t" style="left:1441.00px;top:638.82px;font-size:14px;color:#555;letter-spacing:-0.049px">investing tips</div>
<div class="t" style="left:198.50px;top:666.74px;font-size:14px;color:#555">13</div>
<div class="a" style="left:241.8px;top:667.9px;width:17px;height:17px;background:#fff;box-sizing:border-box;border:1px solid #dedede;border-radius:1px"></div>
<svg class="a" style="left:275px;top:671.9px;" width="10" height="12" viewBox="0 0 10 12"><path d="M2.2 5 V3.6 A2.8 2.8 0 0 1 7.8 3.6 V5" fill="none" stroke="#444" stroke-width="1.7"/><rect x="0.5" y="5" width="9" height="6.5" rx="0.8" fill="#444"/></svg>
<div class="t" style="left:288.20px;top:671.54px;font-size:14px;color:#555;letter-spacing:-0.636px">14226</div>
<div class="t" style="left:349.70px;top:671.64px;font-size:14px;color:#555;letter-spacing:-0.196px">Essential Investment Tips: What Every Investor Should Know</div>
<div class="a" style="left:786.3px;top:670.7px;width:37.4px;height:18.8px;background:#efefef;box-sizing:border-box;border:1px solid #a4a4a4;border-radius:2px"></div>
<svg class="a" style="left:796px;top:674.1px;" width="14" height="12" viewBox="0 0 14 12"><path d="M6.5 2 H2.5 Q1.5 2 1.5 3 V10 Q1.5 11 2.5 11 H9 Q10 11 10 10 V7.5" fill="none" stroke="#444" stroke-width="1.2"/><path d="M5 8 L5.6 6 L10.8 0.8 L12.6 2.6 L7.4 7.8 Z" fill="#444"/></svg>
<div class="t" style="left:830.00px;top:671.64px;font-size:14px;color:#555;letter-spacing:-0.031px">Investing can be a daunting jo...</div>
<div class="t" style="left:1039.70px;top:671.64px;font-size:14px;color:#555;letter-spacing:-0.029px">Discover essential investment tips, warnings, and intriguing f...</div>
<div class="t" style="left:1441.00px;top:671.64px;font-size:14px;color:#555;letter-spacing:-0.100px">investment tips</div>
<div class="t" style="left:198.50px;top:699.56px;font-size:14px;color:#555">14</div>
<div class="a" style="left:241.8px;top:700.8px;width:17px;height:17px;background:#fff;box-sizing:border-box;border:1px solid #dedede;border-radius:1px"></div>
<svg class="a" style="left:275px;top:704.8px;" width="10" height="12" viewBox="0 0 10 12"><path d="M2.2 5 V3.6 A2.8 2.8 0 0 1 7.8 3.6 V5" fill="none" stroke="#444" stroke-width="1.7"/><rect x="0.5" y="5" width="9" height="6.5" rx="0.8" fill="#444"/></svg>
<div class="t" style="left:288.20px;top:704.36px;font-size:14px;color:#555;letter-spacing:-0.636px">14224</div>
<div class="t" style="left:350.70px;top:704.46px;font-size:14px;color:#555;letter-spacing:-0.091px">Top 10 Smart Investing Tips to Grow Your Wealth</div>
<div class="a" style="left:786.3px;top:703.6px;width:37.4px;height:18.8px;background:#efefef;box-sizing:border-box;border:1px solid #a4a4a4;border-radius:2px"></div>
<svg class="a" style="left:796px;top:707.0px;" width="14" height="12" viewBox="0 0 14 12"><path d="M6.5 2 H2.5 Q1.5 2 1.5 3 V10 Q1.5 11 2.5 11 H9 Q10 11 10 10 V7.5" fill="none" stroke="#444" stroke-width="1.2"/><path d="M5 8 L5.6 6 L10.8 0.8 L12.6 2.6 L7.4 7.8 Z" fill="#444"/></svg>
<div class="t" style="left:830.00px;top:704.46px;font-size:14px;color:#555;letter-spacing:-0.008px">Investing can be a powerful w...</div>
<div class="t" style="left:1039.70px;top:704.46px;font-size:14px;color:#555;letter-spacing:0.009px">Discover essential investing tips to build and grow your wealt...</div>
<div class="t" style="left:1441.00px;top:704.46px;font-size:14px;color:#555;letter-spacing:-0.049px">investing tips</div>
</div>
<div class="a" style="left:250px;top:187px;width:311px;height:65.5px;background:#fff;box-shadow:0 1px 3px rgba(0,0,0,0.25);border-radius:1px"></div>
<div class="t" style="left:263.80px;top:198.70px;font-size:13px;color:#5c5c5c;letter-spacing:0.040px">Add rows with AI</div>
<svg class="a" style="left:263px;top:227px;" width="13" height="13" viewBox="0 0 13 13"><rect x="0.7" y="2.5" width="11.6" height="10" fill="none" stroke="#555" stroke-width="1.2"/><path d="M0.7 5.5 H12.3 M0.7 8 H12.3 M0.7 10.5 H12.3 M3.6 5.5 V12.5 M6.5 5.5 V12.5 M9.4 5.5 V12.5" stroke="#555" stroke-width="0.8"/><rect x="2.5" y="0.5" width="1.6" height="3" fill="#555"/><rect x="9" y="0.5" width="1.6" height="3" fill="#555"/></svg>
<div class="t" style="left:279.50px;top:227.60px;font-size:13px;color:#5c5c5c;letter-spacing:-0.062px">View scheduled new rows with AI</div>
<div class="a" style="left:247.3px;top:184.2px;width:316px;height:37.6px;background:transparent;box-sizing:border-box;border:4px solid #f00;border-radius:3px"></div>
<div class="a" style="left:1522px;top:0px;width:14px;height:719px;background:#f1f1f1;"></div>
<div class="a" style="left:1524px;top:13px;width:10.3px;height:378px;background:#c1c1c1;"></div>
<svg class="a" style="left:1522px;top:0px;" width="14" height="12" viewBox="0 0 14 12"><path d="M3.8 8.2 L7 4.8 L10.2 8.2 Z" fill="#a3a3a3"/></svg>
<svg class="a" style="left:1522px;top:705px;" width="14" height="14" viewBox="0 0 14 14"><path d="M4 5.2 L7 8.6 L10 5.2 Z" fill="#505050"/></svg>
<div class="a" style="left:0px;top:719px;width:1522px;height:14px;background:#f1f1f1;"></div>
<div class="a" style="left:14px;top:721.2px;width:341.5px;height:9.8px;background:#c1c1c1;"></div>
<svg class="a" style="left:0px;top:719px;" width="14" height="14" viewBox="0 0 14 14"><path d="M8.4 3.8 L5 7 L8.4 10.2 Z" fill="#a3a3a3"/></svg>
<svg class="a" style="left:1508px;top:719px;" width="14" height="14" viewBox="0 0 14 14"><path d="M6 3.8 L9.4 7 L6 10.2 Z" fill="#505050"/></svg>
<div class="a" style="left:1522px;top:719px;width:14px;height:14px;background:#dcdcdc;"></div>
</body></html>
